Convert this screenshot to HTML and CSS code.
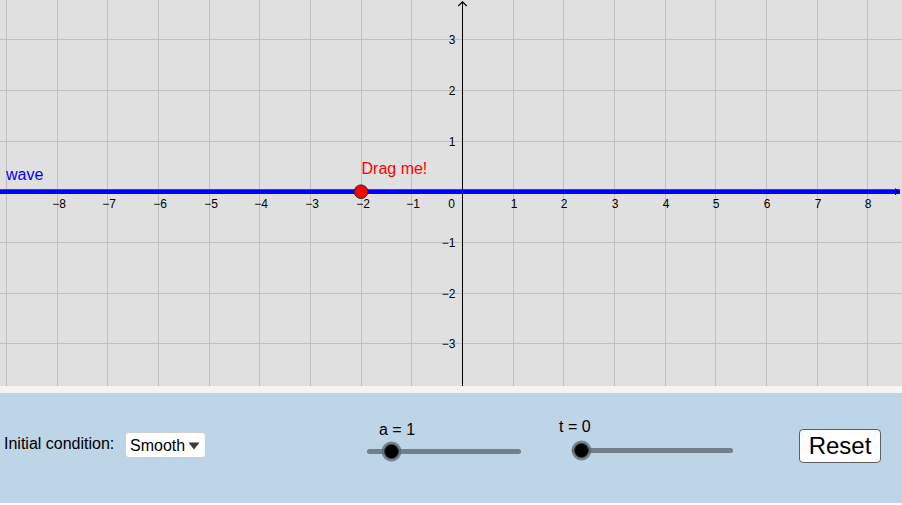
FILE: index.html
```html
<!DOCTYPE html>
<html>
<head>
<meta charset="utf-8">
<link rel="stylesheet" href="styles.css">
</head>
<body>
<div class="app">
  <svg class="graph" width="902" height="386" viewBox="0 0 902 386" xmlns="http://www.w3.org/2000/svg">
    <rect x="0" y="0" width="902" height="386" fill="#e0e0e0"/>
    <g stroke="#c0c0c0" stroke-width="1" shape-rendering="crispEdges">
      <line x1="6.5" y1="0" x2="6.5" y2="386"/>
      <line x1="57.5" y1="0" x2="57.5" y2="386"/>
      <line x1="107.5" y1="0" x2="107.5" y2="386"/>
      <line x1="158.5" y1="0" x2="158.5" y2="386"/>
      <line x1="209.5" y1="0" x2="209.5" y2="386"/>
      <line x1="259.5" y1="0" x2="259.5" y2="386"/>
      <line x1="310.5" y1="0" x2="310.5" y2="386"/>
      <line x1="361.5" y1="0" x2="361.5" y2="386"/>
      <line x1="411.5" y1="0" x2="411.5" y2="386"/>
      <line x1="513.5" y1="0" x2="513.5" y2="386"/>
      <line x1="563.5" y1="0" x2="563.5" y2="386"/>
      <line x1="614.5" y1="0" x2="614.5" y2="386"/>
      <line x1="665.5" y1="0" x2="665.5" y2="386"/>
      <line x1="715.5" y1="0" x2="715.5" y2="386"/>
      <line x1="766.5" y1="0" x2="766.5" y2="386"/>
      <line x1="817.5" y1="0" x2="817.5" y2="386"/>
      <line x1="867.5" y1="0" x2="867.5" y2="386"/>
      <line x1="0" y1="39.5" x2="902" y2="39.5"/>
      <line x1="0" y1="90.5" x2="902" y2="90.5"/>
      <line x1="0" y1="141.5" x2="902" y2="141.5"/>
      <line x1="0" y1="242.5" x2="902" y2="242.5"/>
      <line x1="0" y1="293.5" x2="902" y2="293.5"/>
      <line x1="0" y1="343.5" x2="902" y2="343.5"/>
    </g>
    <!-- axes -->
    <line x1="462.5" y1="1.5" x2="462.5" y2="386" stroke="#000" stroke-width="1" shape-rendering="crispEdges"/>
    <polyline points="458.3,6 462.5,1.8 466.7,6" fill="none" stroke="#000" stroke-width="1.2"/>
    <line x1="0" y1="191.5" x2="900" y2="191.5" stroke="#000" stroke-width="1"/>
    <g class="ax" font-size="12" fill="#000">
      <text x="59" y="207.5" text-anchor="middle">−8</text>
      <text x="109" y="207.5" text-anchor="middle">−7</text>
      <text x="160" y="207.5" text-anchor="middle">−6</text>
      <text x="211" y="207.5" text-anchor="middle">−5</text>
      <text x="261" y="207.5" text-anchor="middle">−4</text>
      <text x="312" y="207.5" text-anchor="middle">−3</text>
      <text x="363" y="207.5" text-anchor="middle">−2</text>
      <text x="413" y="207.5" text-anchor="middle">−1</text>
      <text x="455" y="207.5" text-anchor="end">0</text>
      <text x="514" y="207.5" text-anchor="middle">1</text>
      <text x="564" y="207.5" text-anchor="middle">2</text>
      <text x="615" y="207.5" text-anchor="middle">3</text>
      <text x="666" y="207.5" text-anchor="middle">4</text>
      <text x="716" y="207.5" text-anchor="middle">5</text>
      <text x="767" y="207.5" text-anchor="middle">6</text>
      <text x="818" y="207.5" text-anchor="middle">7</text>
      <text x="868" y="207.5" text-anchor="middle">8</text>
      <text x="455.5" y="44.3" text-anchor="end">3</text>
      <text x="455.5" y="95.3" text-anchor="end">2</text>
      <text x="455.5" y="146.3" text-anchor="end">1</text>
      <text x="455.5" y="246.8" text-anchor="end">−1</text>
      <text x="455.5" y="297.8" text-anchor="end">−2</text>
      <text x="455.5" y="347.8" text-anchor="end">−3</text>
    </g>
    <!-- wave -->
    <line x1="0" y1="191.7" x2="900" y2="191.7" stroke="#0000ff" stroke-width="4.8"/>
    <polyline points="895,188.5 898.5,191.7 895,194.9" fill="none" stroke="#000" stroke-width="1"/>
    <text class="lbl" x="6" y="179.5" font-size="16" fill="#0000ff">wave</text>
    <text class="lbl" x="361.5" y="173.5" font-size="16" fill="#ff0000">Drag me!</text>
    <circle cx="361" cy="191.7" r="6.8" fill="#ff0000" stroke="#2a2a2a" stroke-width="1"/>
  </svg>
  <div class="strip"></div>
  <div class="panel">
    <div class="cond-label">Initial condition:</div>
    <div class="select">
      <span class="select-text">Smooth</span>
      <svg class="caret" width="12" height="8" viewBox="0 0 12 8"><polygon points="0.5,0.5 11.5,0.5 6,7.5" fill="#3a3a3a"/></svg>
    </div>
    <div class="slider slider-a">
      <div class="slider-label">a = 1</div>
      <div class="track"><span class="thumb thumb-a"></span></div>
    </div>
    <div class="slider slider-t">
      <div class="slider-label">t = 0</div>
      <div class="track"><span class="thumb thumb-t"></span></div>
    </div>
    <button class="reset">Reset</button>
  </div>
</div>
</body>
</html>
```
FILE: styles.css
```css
html, body {
  margin: 0;
  padding: 0;
  background: #ffffff;
}
body {
  font-family: "Liberation Sans", Arial, sans-serif;
  color: #000;
  width: 902px;
  height: 505px;
  overflow: hidden;
}
.app {
  display: flex;
  flex-direction: column;
  width: 902px;
}
.graph {
  display: block;
}
.graph text {
  font-family: "Liberation Sans", Arial, sans-serif;
}
.strip {
  height: 7px;
  background: #f5f5f5;
}
.panel {
  height: 110px;
  background: #bed4e7;
  display: flex;
  align-items: flex-start;
  box-sizing: border-box;
}
.cond-label {
  font-size: 16px;
  line-height: 18px;
  margin-top: 42px;
  margin-left: 4px;
  width: 110px;
  white-space: nowrap;
}
.select {
  margin-top: 39px;
  margin-left: 11px;
  width: 81px;
  height: 26px;
  box-sizing: border-box;
  border: 1px solid #cfcfcf;
  border-radius: 4px;
  background: #ffffff;
  display: flex;
  align-items: center;
  padding-left: 4px;
  padding-top: 1px;
}
.select-text {
  font-size: 16px;
  line-height: 18px;
}
.caret {
  display: block;
  margin-left: 3px;
  margin-top: 1px;
}
.slider {
  display: flex;
  flex-direction: column;
}
.slider-label {
  font-size: 16px;
  line-height: 18px;
  white-space: nowrap;
}
.track {
  position: relative;
  height: 5px;
  border-radius: 3px;
  background: #737f8a;
}
.thumb {
  position: absolute;
  top: -4px;
  width: 13px;
  height: 13px;
  border-radius: 50%;
  background: #000;
  box-shadow: 0 0 0 1px #333, 0 0 0 3.5px rgba(95, 105, 115, 0.75);
}
.slider-a {
  margin-left: 161px;
  width: 154px;
  margin-top: 28px;
}
.slider-a .slider-label {
  margin-left: 12px;
}
.slider-a .track {
  margin-top: 10px;
}
.thumb-a {
  left: 17.5px;
}
.slider-t {
  margin-left: 38px;
  width: 174px;
  margin-top: 25px;
}
.slider-t .track {
  margin-left: 13px;
  margin-top: 12px;
}
.thumb-t {
  left: 2.5px;
}
.reset {
  margin-top: 36px;
  margin-left: 66px;
  width: 82px;
  height: 34px;
  box-sizing: border-box;
  border: 1px solid #5f5f5f;
  border-radius: 4px;
  background: #ffffff;
  font-family: "Liberation Sans", Arial, sans-serif;
  font-size: 24px;
  line-height: 30px;
  padding: 0;
  color: #000;
}
```
